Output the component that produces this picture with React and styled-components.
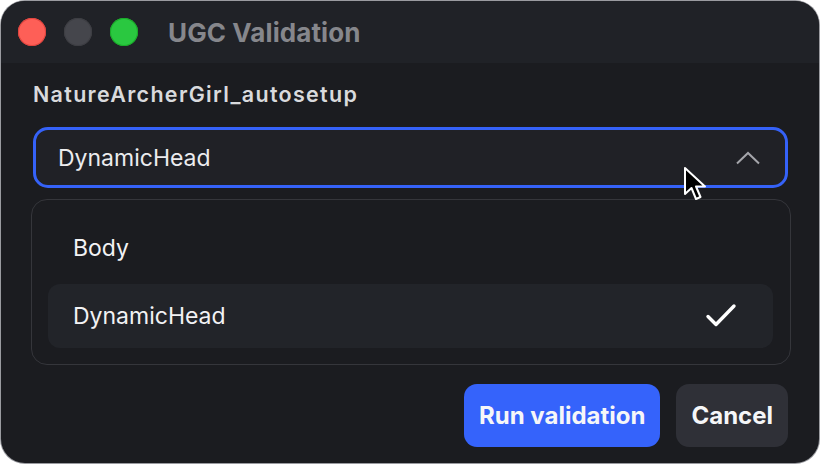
import React from 'react';
import styled, { createGlobalStyle } from 'styled-components';

const GlobalStyle = createGlobalStyle`
  html, body {
    margin: 0;
    padding: 0;
    background: #ffffff;
  }
  body {
    font-family: Inter, "Noto Sans", sans-serif;
    -webkit-font-smoothing: antialiased;
  }
`;

const Window = styled.div`
  margin: 1px;
  width: 818px;
  height: 462px;
  box-sizing: border-box;
  border-radius: 24px;
  background: #1b1c20;
  overflow: hidden;
  display: flex;
  flex-direction: column;
  position: relative;
  box-shadow: 0 0 0 1px #9a9ba0;
`;

const TitleBar = styled.div`
  height: 62px;
  background: #202227;
  display: flex;
  align-items: center;
  padding-left: 17px;
  gap: 18px;
`;

const Lights = styled.div`
  display: flex;
  gap: 18px;
  align-items: center;
`;

const Light = styled.span`
  width: 28px;
  height: 28px;
  border-radius: 50%;
  background: ${p => p.color};
  box-shadow: inset 0 0 0 1px ${p => p.edge};
`;

const Title = styled.h1`
  margin: 0 0 0 12px;
  font-size: 26px;
  font-weight: 700;
  color: #86878c;
  letter-spacing: 0.1px;
`;

const Body = styled.div`
  flex: 1;
  display: flex;
  flex-direction: column;
  padding: 19px 31px 0 32px;
`;

const Label = styled.div`
  font-size: 21.5px;
  line-height: 24px;
  font-weight: 600;
  letter-spacing: 1.3px;
  color: #d9dadd;
  margin-bottom: 21px;
`;

const Select = styled.div`
  height: 61px;
  box-sizing: border-box;
  border: 3px solid #3562f8;
  border-radius: 15px;
  background: #202126;
  display: flex;
  align-items: center;
  justify-content: space-between;
  padding: 0 24px 0 22px;
  font-size: 23px;
  color: #ececee;
`;

const Menu = styled.div`
  margin: 11px -3px 0 -2px;
  height: 166px;
  box-sizing: border-box;
  border: 1px solid #35363b;
  border-radius: 16px;
  padding: 16px 17px 16px 16px;
  display: flex;
  flex-direction: column;
  gap: 4px;
`;

const Option = styled.div`
  height: 64px;
  border-radius: 12px;
  background: ${p => (p.selected ? '#222429' : 'transparent')};
  display: flex;
  align-items: center;
  justify-content: space-between;
  padding: 0 36px 0 25px;
  font-size: 23px;
  color: #f2f2f4;
`;

const Actions = styled.div`
  display: flex;
  justify-content: flex-end;
  gap: 16px;
  margin-top: 19px;
`;

const Button = styled.button`
  height: 63px;
  border: none;
  border-radius: 13px;
  padding: 0 ${p => (p.primary ? '15px' : '15px')};
  background: ${p => (p.primary ? '#3563fb' : '#2f3037')};
  color: #f5f6f8;
  font-family: Inter, "Noto Sans", sans-serif;
  font-size: 24px;
  font-weight: 700;
`;

const Cursor = styled.svg`
  position: absolute;
  left: 682px;
  top: 165px;
`;

const Chevron = () => (
  <svg width="26" height="14" viewBox="0 0 26 14">
    <path d="M2 12.5 L13 2 L24 12.5" fill="none" stroke="#a4a5aa" strokeWidth="2" />
  </svg>
);

const Check = () => (
  <svg width="32" height="26" viewBox="0 0 32 26">
    <path d="M3 13.5 L11 21.5 L29 3" fill="none" stroke="#ffffff" strokeWidth="3.4" strokeLinecap="round" strokeLinejoin="round" />
  </svg>
);

const App = () => (
  <>
    <GlobalStyle />
    <Window>
      <TitleBar>
        <Lights>
          <Light color="#fe5f57" edge="#e0443e" />
          <Light color="#45464c" edge="#3d3e43" />
          <Light color="#2ac840" edge="#1aab29" />
        </Lights>
        <Title>UGC Validation</Title>
      </TitleBar>
      <Body>
        <Label>NatureArcherGirl_autosetup</Label>
        <Select>
          <span>DynamicHead</span>
          <Chevron />
        </Select>
        <Menu>
          <Option>Body</Option>
          <Option selected>
            <span>DynamicHead</span>
            <Check />
          </Option>
        </Menu>
        <Actions>
          <Button primary>Run validation</Button>
          <Button>Cancel</Button>
        </Actions>
      </Body>
      <Cursor width="26" height="38" viewBox="0 0 26 38">
        <path
          d="M2 2 L2 28 L8.5 22 L13 33 L17.5 31 L13 20.5 L22 20.5 Z"
          fill="#000000"
          stroke="#ffffff"
          strokeWidth="2"
          strokeLinejoin="round"
        />
      </Cursor>
    </Window>
  </>
);

export default App;
